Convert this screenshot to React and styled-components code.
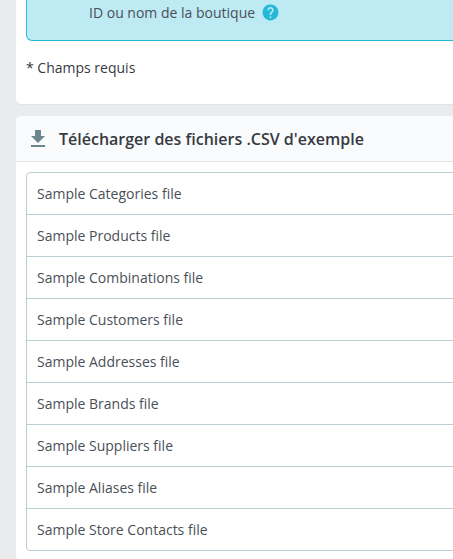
import React from 'react';
import styled, { createGlobalStyle } from 'styled-components';

const GlobalStyle = createGlobalStyle`
  html, body {
    margin: 0;
    height: 559px;
    overflow: hidden;
    background-color: #eaebec;
  }
  * {
    box-sizing: border-box;
  }
`;

const Page = styled.div`
  display: flex;
  flex-direction: column;
  gap: 12px;
  width: 600px;
  padding-left: 16px;
  font-family: 'Open Sans', 'Liberation Sans', sans-serif;
  font-size: 14px;
  color: #363a41;
`;

const Card = styled.section`
  background-color: #fff;
  border-radius: 5px;
  box-shadow: 0 1px 0 0 #dfe5e6;
`;

const ImportCard = styled(Card)`
  display: flex;
  flex-direction: column;
  height: 104px;
  padding: 0 10px;
  border-radius: 0 0 5px 5px;
`;

const InfoAlert = styled.div`
  display: flex;
  align-items: flex-start;
  height: 41px;
  padding: 3px 0 0 62px;
  background-color: #beeaf3;
  border: 1px solid #25b9d7;
  border-top: 0;
  border-radius: 0 0 0 6px;
  line-height: 19px;
  color: #4a5058;
`;

const HelpIcon = styled.svg`
  width: 19px;
  height: 19px;
  margin-left: 5.5px;
  fill: #25b9d7;
`;

const RequiredNote = styled.p`
  margin: 17px 0 0;
  line-height: 19px;
  color: #363a41;
`;

const CardHeader = styled.header`
  display: flex;
  align-items: center;
  height: 46px;
  padding-left: 10px;
  background-color: #fafbfc;
  border-bottom: 1px solid #dfe5e6;
  border-radius: 5px 5px 0 0;
`;

const HeaderIcon = styled.svg`
  width: 24px;
  height: 24px;
  margin-right: 9px;
  fill: #6c868e;
`;

const CardTitle = styled.h3`
  margin: 0;
  font-size: 16px;
  font-weight: 600;
  line-height: 22px;
  color: #363a41;
`;

const CardBody = styled.div`
  padding: 10px;
`;

const FileList = styled.div`
  display: flex;
  flex-direction: column;
  border: 1px solid #bbcdd2;
  border-radius: 4px;
`;

const FileRow = styled.a`
  display: flex;
  align-items: center;
  height: 42px;
  padding-left: 10px;
  color: #4a5058;
  text-decoration: none;
  border-bottom: 1px solid #bbcdd2;

  &:last-child {
    height: 41px;
    border-bottom: 0;
  }
`;

const sampleFiles = [
  'Sample Categories file',
  'Sample Products file',
  'Sample Combinations file',
  'Sample Customers file',
  'Sample Addresses file',
  'Sample Brands file',
  'Sample Suppliers file',
  'Sample Aliases file',
  'Sample Store Contacts file',
];

const App = () => {
  return (
    <>
      <GlobalStyle />
      <Page>
        <ImportCard>
          <InfoAlert>
            ID ou nom de la boutique
            <HelpIcon viewBox="0 0 24 24">
              <path d="M12 2C6.48 2 2 6.48 2 12s4.48 10 10 10 10-4.48 10-10S17.52 2 12 2zm1 17h-2v-2h2v2zm2.07-7.75l-.9.92C13.45 12.9 13 13.5 13 15h-2v-.5c0-1.1.45-2.1 1.17-2.83l1.24-1.26c.37-.36.59-.86.59-1.41 0-1.1-.9-2-2-2s-2 .9-2 2H8c0-2.21 1.79-4 4-4s4 1.79 4 4c0 .88-.36 1.68-.93 2.25z" />
            </HelpIcon>
          </InfoAlert>
          <RequiredNote>* Champs requis</RequiredNote>
        </ImportCard>
        <Card>
          <CardHeader>
            <HeaderIcon viewBox="0 0 24 24">
              <path d="M19 9h-4V3H9v6H5l7 7 7-7zM5 18v2h14v-2H5z" />
            </HeaderIcon>
            <CardTitle>Télécharger des fichiers .CSV d'exemple</CardTitle>
          </CardHeader>
          <CardBody>
            <FileList>
              {sampleFiles.map((name) => (
                <FileRow key={name}>{name}</FileRow>
              ))}
            </FileList>
          </CardBody>
        </Card>
      </Page>
    </>
  );
};

export default App;
